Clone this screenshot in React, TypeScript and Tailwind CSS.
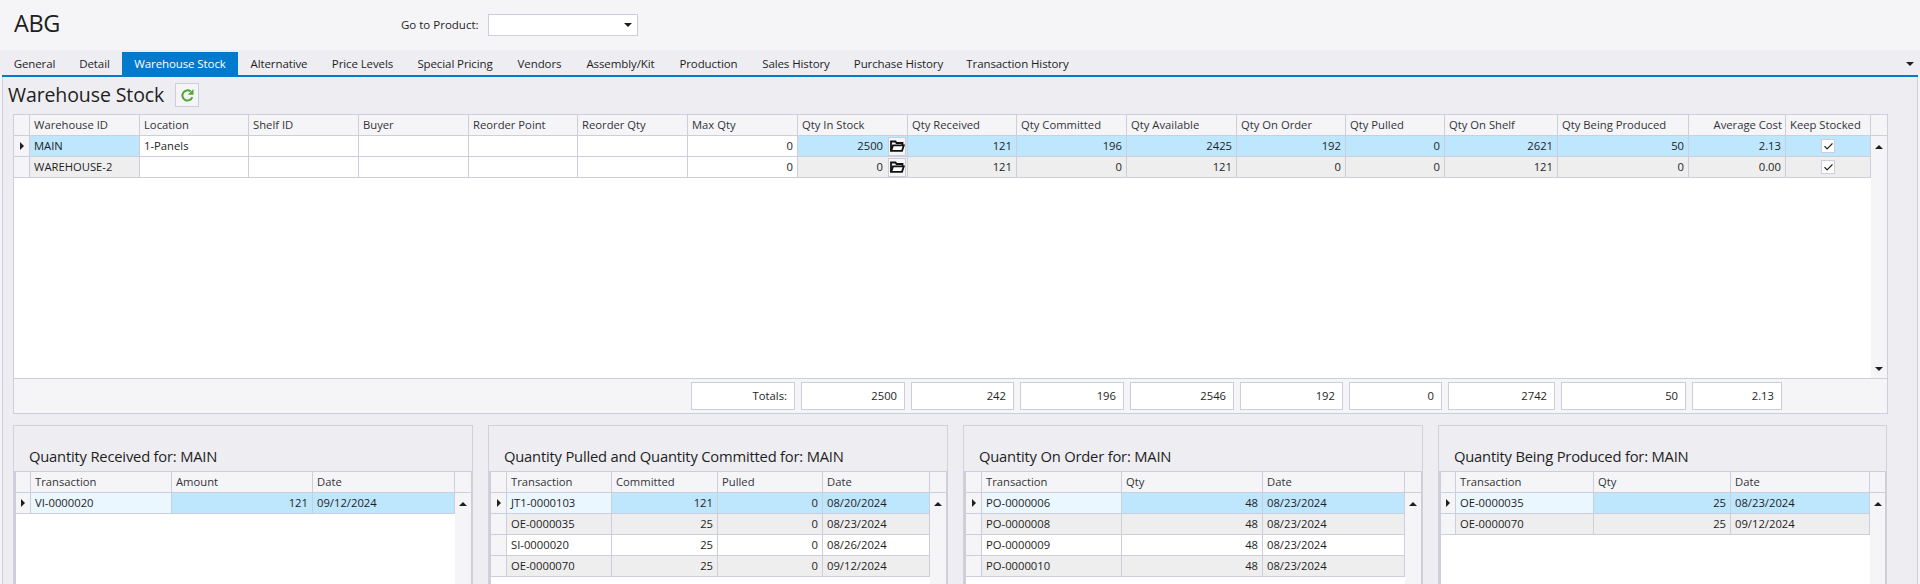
import React from "react";
import { Check } from "lucide-react";

type Align = "l" | "r" | "c";
type Col = { w: string; title: string; align?: Align };

const Arrow = ({ dir }: { dir: "up" | "down" | "right" }) => {
  const p = dir === "up" ? "M0 4 L4 0 L8 4 Z" : dir === "down" ? "M0 0 L8 0 L4 4 Z" : "M0 0 L4 4 L0 8 Z";
  return (
    <svg width={dir === "right" ? 4 : 8} height={dir === "right" ? 8 : 4} viewBox={dir === "right" ? "0 0 4 8" : "0 0 8 4"}>
      <path d={p} fill="#1e1e1e" />
    </svg>
  );
};

const FolderIcon = () => (
  <svg width="15" height="12" viewBox="0 0 15 12" fill="none">
    <path d="M1 11 V1.5 H5.5 L6.5 3 H12.5 V5" stroke="#111" strokeWidth="1.8" />
    <path d="M1.2 10.8 L3 5.4 H13.8 L12 10.8 Z" stroke="#111" strokeWidth="1.8" fill="#fff" />
  </svg>
);

const RefreshIcon = () => (
  <svg width="15" height="15" viewBox="0 0 15 15" fill="none">
    <path d="M12.3 9.2 A5.1 5.1 0 1 1 10.6 3.4" stroke="#4fa82e" strokeWidth="2" />
    <path d="M13.5 1 V6.8 H7.8 Z" fill="#4fa82e" />
  </svg>
);

const SEL = "bg-[#bee6fd]";
const SEL1 = "bg-[#ebf7fe]";
const ALT = "bg-[#eeeeee]";
const WHITE = "bg-white";

const Cell = ({ w, bg, align, children }: { w: string; bg?: string; align?: Align; children?: React.ReactNode }) => (
  <div
    className={`${w} ${bg ?? WHITE} h-[21px] shrink-0 border-r border-b border-[#ccceDB] flex items-center overflow-hidden whitespace-nowrap text-[#1e1e1e] ${
      align === "r" ? "justify-end pr-[4px]" : align === "c" ? "justify-center" : "pl-[4px]"
    }`}
  >
    {children}
  </div>
);

const HeaderCell = ({ w, title, align }: Col) => (
  <div
    className={`${w} h-[21px] shrink-0 bg-[#f5f5f8] border-r border-b border-[#ccceDB] flex items-center overflow-hidden whitespace-nowrap text-[#333337] ${
      align === "r" ? "justify-end pr-[3px]" : "pl-[4px]"
    }`}
  >
    {title}
  </div>
);

const mainCols: Col[] = [
  { w: "w-[16px]", title: "" },
  { w: "w-[110px]", title: "Warehouse ID" },
  { w: "w-[109px]", title: "Location" },
  { w: "w-[110px]", title: "Shelf ID" },
  { w: "w-[110px]", title: "Buyer" },
  { w: "w-[109px]", title: "Reorder Point" },
  { w: "w-[110px]", title: "Reorder Qty" },
  { w: "w-[110px]", title: "Max Qty" },
  { w: "w-[110px]", title: "Qty In Stock" },
  { w: "w-[109px]", title: "Qty Received" },
  { w: "w-[110px]", title: "Qty Committed" },
  { w: "w-[110px]", title: "Qty Available" },
  { w: "w-[109px]", title: "Qty On Order" },
  { w: "w-[99px]", title: "Qty Pulled" },
  { w: "w-[113px]", title: "Qty On Shelf" },
  { w: "w-[131px]", title: "Qty Being Produced" },
  { w: "w-[97px]", title: "Average Cost", align: "r" },
  { w: "w-[85px]", title: "Keep Stocked" },
];

const mainRows = [
  { selected: true, id: "MAIN", loc: "1-Panels", max: "0", stock: "2500", vals: ["121", "196", "2425", "192", "0", "2621", "50", "2.13"] },
  { selected: false, id: "WAREHOUSE-2", loc: "", max: "0", stock: "0", vals: ["121", "0", "121", "0", "0", "121", "0", "0.00"] },
];

const totals = [
  { w: "w-[104px]", v: "Totals:" },
  { w: "w-[104px]", v: "2500" },
  { w: "w-[103px]", v: "242" },
  { w: "w-[104px]", v: "196" },
  { w: "w-[104px]", v: "2546" },
  { w: "w-[103px]", v: "192" },
  { w: "w-[93px]", v: "0" },
  { w: "w-[107px]", v: "2742" },
  { w: "w-[125px]", v: "50" },
  { w: "w-[90px]", v: "2.13" },
];

const MainGrid = () => (
  <div className="ml-[10px] w-[1875px] border border-[#ccceDB] bg-white flex flex-col">
    <div className="flex h-[263px]">
      <div className="w-[1857px] shrink-0 flex flex-col border-b-0">
        <div className="flex">
          {mainCols.map((c, i) => (
            <HeaderCell key={i} {...c} />
          ))}
        </div>
        {mainRows.map((r, ri) => {
          const bg = r.selected ? SEL : ALT;
          return (
            <div className="flex" key={ri}>
              <div className="w-[16px] h-[21px] shrink-0 bg-[#f5f5f8] border-r border-b border-[#ccceDB] flex items-center justify-center">
                {r.selected && <Arrow dir="right" />}
              </div>
              <Cell w="w-[110px]" bg={bg}>{r.id}</Cell>
              <Cell w="w-[109px]">{r.loc}</Cell>
              <Cell w="w-[110px]" />
              <Cell w="w-[110px]" />
              <Cell w="w-[109px]" />
              <Cell w="w-[110px]" />
              <Cell w="w-[110px]" align="r">{r.max}</Cell>
              <div className={`w-[110px] ${bg} h-[21px] shrink-0 border-r border-b border-[#ccceDB] flex items-center justify-end text-[#1e1e1e] pr-[1px] gap-[5px]`}>
                <span>{r.stock}</span>
                <span className="w-[18px] h-[19px] bg-[#f5f5f8] border border-[#ccceDB] flex items-center justify-center">
                  <FolderIcon />
                </span>
              </div>
              {r.vals.map((v, i) => (
                <Cell key={i} w={mainCols[9 + i].w} bg={bg} align="r">{v}</Cell>
              ))}
              <Cell w="w-[85px]" bg={bg} align="c">
                <span className="w-[14px] h-[14px] bg-white border border-[#ccceDB] flex items-center justify-center">
                  <Check size={11} strokeWidth={2.4} color="#1e1e1e" />
                </span>
              </Cell>
            </div>
          );
        })}
      </div>
      <ScrollBar />
    </div>
    <div className="h-[35px] bg-[#f5f5f8] border-t border-[#ccceDB] flex items-center gap-[6px] pl-[677px]">
      {totals.map((t, i) => (
        <div key={i} className={`${t.w} h-[28px] bg-white border border-[#ccceDB] flex items-center justify-end pr-[7px] text-[#1e1e1e]`}>
          {t.v}
        </div>
      ))}
    </div>
  </div>
);

const ScrollBar = ({ noDown }: { noDown?: boolean }) => (
  <div className="flex-1 min-w-0 bg-[#f5f5f8] flex flex-col items-center">
    <div className="h-[21px] w-full border-b border-[#ccceDB]" />
    <div className="h-[21px] flex items-center justify-center"><Arrow dir="up" /></div>
    <div className="flex-1" />
    {!noDown && <div className="h-[16px] pb-[2px] flex items-center justify-center"><Arrow dir="down" /></div>}
  </div>
);

type PanelProps = {
  panelW: string;
  title: string;
  cols: Col[];
  rows: string[][];
  gridW: string;
};

const Panel = ({ panelW, title, cols, rows, gridW }: PanelProps) => (
  <div className={`${panelW} shrink-0 h-[200px] bg-[#eeeef2] border border-[#d2d2d6] flex flex-col`}>
    <div className="h-[45px] shrink-0 flex items-end pb-[7px] pl-[15px] text-[14.75px] text-[#1e1e1e] whitespace-nowrap tracking-[-0.2px]">
      {title}
    </div>
    <div className="flex-1 flex border-t border-[#ccceDB] border-l-2 border-r border-l-[#ccceDB] bg-white">
      <div className={`${gridW} shrink-0 flex flex-col`}>
        <div className="flex">
          {cols.map((c, i) => (
            <HeaderCell key={i} {...c} />
          ))}
        </div>
        {rows.map((r, ri) => {
          const bg = ri === 0 ? SEL : ri % 2 === 1 ? ALT : WHITE;
          const isNum = (i: number) => i > 0 && i < r.length - 1;
          return (
            <div className="flex" key={ri}>
              <div className={`${cols[0].w} h-[21px] shrink-0 bg-[#f5f5f8] border-r border-b border-[#ccceDB] flex items-center justify-center`}>
                {ri === 0 && <Arrow dir="right" />}
              </div>
              {r.map((v, i) => (
                <Cell key={i} w={cols[i + 1].w} bg={ri === 0 && i === 0 ? SEL1 : bg} align={isNum(i) ? "r" : "l"}>
                  {v}
                </Cell>
              ))}
            </div>
          );
        })}
      </div>
      <ScrollBar noDown />
    </div>
  </div>
);

const tabs = [
  { t: "General", w: "w-[65px]" },
  { t: "Detail", w: "w-[55px]" },
  { t: "Warehouse Stock", w: "w-[116px]", active: true },
  { t: "Alternative", w: "w-[82px]" },
  { t: "Price Levels", w: "w-[85px]" },
  { t: "Special Pricing", w: "w-[100px]" },
  { t: "Vendors", w: "w-[69px]" },
  { t: "Assembly/Kit", w: "w-[93px]" },
  { t: "Production", w: "w-[83px]" },
  { t: "Sales History", w: "w-[92px]" },
  { t: "Purchase History", w: "w-[113px]" },
  { t: "Transaction History", w: "w-[125px]" },
];

export default function App() {
  return (
    <div className="w-[1920px] h-[584px] overflow-hidden bg-[#f5f5f8] font-['Open_Sans',sans-serif] text-[11.25px] leading-none">
      <div className="h-[50px] flex items-center">
        <div className="w-[401px] pl-[14px] text-[23.5px] text-[#1e1e1e] tracking-[-0.4px] -mt-[2px]">ABG</div>
        <div className="w-[87px] text-[#1e1e1e] text-[11.5px]">Go to Product:</div>
        <div className="w-[150px] h-[22px] bg-white border border-[#ccceDB] flex items-center justify-end pr-[5px]">
          <Arrow dir="down" />
        </div>
      </div>

      <div className="h-[25px] bg-[#eeeef2] flex items-end pl-[2px] relative">
        {tabs.map((t) => (
          <div
            key={t.t}
            className={`${t.w} h-[23px] pt-[1px] flex items-center justify-center whitespace-nowrap text-[11.5px] tracking-[-0.1px] ${
              t.active ? "bg-[#007acc] text-white" : "text-[#1e1e1e]"
            }`}
          >
            {t.t}
          </div>
        ))}
        <div className="absolute right-[6px] top-[12px]"><Arrow dir="down" /></div>
      </div>
      <div className="h-[2px] bg-[#007acc] ml-[2px] mr-[2px]" />

      <div className="mx-[2px] h-[507px] bg-[#eeeef2] border-x border-[#ccceDB]">
        <div className="h-[37px] flex items-center pl-[5px]">
          <div className="text-[19.5px] text-[#1e1e1e] w-[167px] -mt-[2px] tracking-[-0.1px]">Warehouse Stock</div>
          <div className="w-[24px] h-[24px] bg-[#f5f5f8] border border-[#ccceDB] flex items-center justify-center -mt-[1px]">
            <RefreshIcon />
          </div>
        </div>

        <MainGrid />

        <div className="flex ml-[10px] mt-[11px]">
          <Panel
            panelW="w-[460px]"
            gridW="w-[439px]"
            title="Quantity Received for: MAIN"
            cols={[
              { w: "w-[15px]", title: "" },
              { w: "w-[141px]", title: "Transaction" },
              { w: "w-[141px]", title: "Amount" },
              { w: "w-[142px]", title: "Date" },
            ]}
            rows={[["VI-0000020", "121", "09/12/2024"]]}
          />
          <div className="w-[15px] shrink-0" />
          <Panel
            panelW="w-[460px]"
            gridW="w-[439px]"
            title="Quantity Pulled and Quantity Committed for: MAIN"
            cols={[
              { w: "w-[16px]", title: "" },
              { w: "w-[105px]", title: "Transaction" },
              { w: "w-[106px]", title: "Committed" },
              { w: "w-[105px]", title: "Pulled" },
              { w: "w-[107px]", title: "Date" },
            ]}
            rows={[
              ["JT1-0000103", "121", "0", "08/20/2024"],
              ["OE-0000035", "25", "0", "08/23/2024"],
              ["SI-0000020", "25", "0", "08/26/2024"],
              ["OE-0000070", "25", "0", "09/12/2024"],
            ]}
          />
          <div className="w-[15px] shrink-0" />
          <Panel
            panelW="w-[460px]"
            gridW="w-[439px]"
            title="Quantity On Order for: MAIN"
            cols={[
              { w: "w-[16px]", title: "" },
              { w: "w-[140px]", title: "Transaction" },
              { w: "w-[141px]", title: "Qty" },
              { w: "w-[142px]", title: "Date" },
            ]}
            rows={[
              ["PO-0000006", "48", "08/23/2024"],
              ["PO-0000008", "48", "08/23/2024"],
              ["PO-0000009", "48", "08/23/2024"],
              ["PO-0000010", "48", "08/23/2024"],
            ]}
          />
          <div className="w-[15px] shrink-0" />
          <Panel
            panelW="w-[449px]"
            gridW="w-[429px]"
            title="Quantity Being Produced for: MAIN"
            cols={[
              { w: "w-[15px]", title: "" },
              { w: "w-[138px]", title: "Transaction" },
              { w: "w-[137px]", title: "Qty" },
              { w: "w-[139px]", title: "Date" },
            ]}
            rows={[
              ["OE-0000035", "25", "08/23/2024"],
              ["OE-0000070", "25", "09/12/2024"],
            ]}
          />
        </div>
      </div>
    </div>
  );
}
